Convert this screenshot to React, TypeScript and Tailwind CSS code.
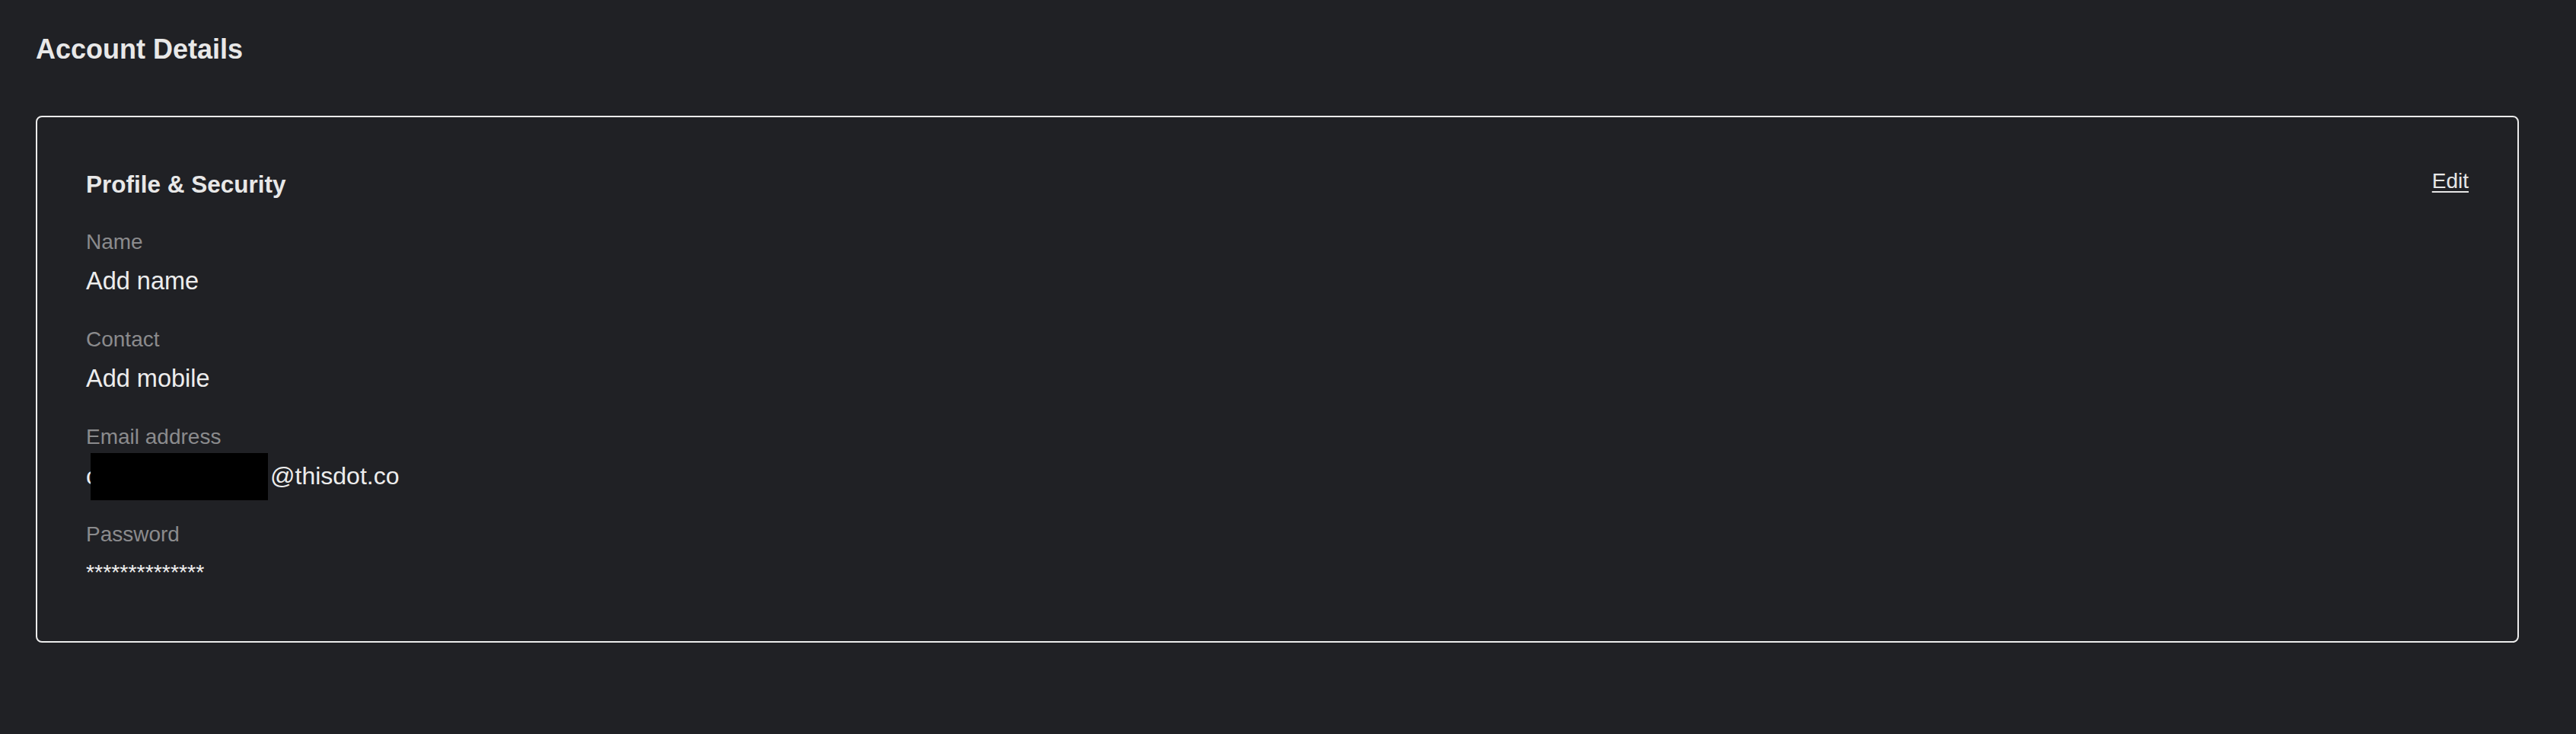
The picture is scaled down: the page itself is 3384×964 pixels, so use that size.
const fields = [
  { label: "Name", value: "Add name" },
  { label: "Contact", value: "Add mobile" },
];

function Label({ children }: { children: React.ReactNode }) {
  return <p className="text-[28px] leading-[40px] text-[#8b8b8d]">{children}</p>;
}

export default function App() {
  return (
    <main
      className="min-h-screen bg-[#202125] pl-[47px] pr-[75px] pt-[38px] pb-10 text-[#ededed]"
      style={{ fontFamily: '"Liberation Sans", Arial, Helvetica, sans-serif' }}
    >
      <h1 className="text-[36px] font-bold leading-[54px] text-[#e8e8e8]">Account Details</h1>

      <section className="mt-[60px] rounded-[8px] border-2 border-[#ececec] px-16 pt-16 pb-[69px]">
        <div className="flex items-start justify-between">
          <h2 className="text-[31.5px] font-bold leading-[48px] text-[#e8e8e8]">Profile &amp; Security</h2>
          <button className="text-[28px] leading-[40px] text-[#e6e6e6] underline underline-offset-[4px]">
            Edit
          </button>
        </div>

        <div className="mt-8 flex flex-col gap-[33px]">
          {fields.map((f) => (
            <div key={f.label}>
              <Label>{f.label}</Label>
              <p className="mt-[7px] text-[32.5px] leading-[48px]">{f.value}</p>
            </div>
          ))}

          <div>
            <Label>Email address</Label>
            <p className="mt-[7px] text-[32px] leading-[48px]">
              <span className="relative inline-block">
                c<span className="inline-block w-[226px]" />
                <span className="absolute left-[6px] top-[-6px] h-[62px] w-[233px] bg-black" />
              </span>
              @thisdot.co
            </p>
          </div>

          <div>
            <Label>Password</Label>
            <p className="mt-[7px] text-[28.5px] leading-[44px]">**************</p>
          </div>
        </div>
      </section>
    </main>
  );
}
